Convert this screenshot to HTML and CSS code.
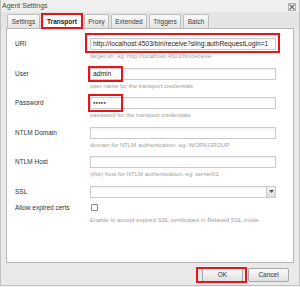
FILE: index.html
```html
<!DOCTYPE html>
<html>
<head>
<meta charset="utf-8">
<link rel="stylesheet" href="styles.css">
</head>
<body>
<div class="dialog">
  <div class="titlebar">
    <span class="title">Agent Settings</span>
    <span class="close"><svg width="6" height="6" viewBox="0 0 6 6"><path d="M0.5 0.5L5.5 5.5M5.5 0.5L0.5 5.5" stroke="#666" stroke-width="1.1"/></svg></span>
  </div>
  <div class="tabstrip">
    <div class="tab t-settings">Settings</div>
    <div class="tab t-transport active mark">Transport</div>
    <div class="tab t-proxy">Proxy</div>
    <div class="tab t-extended">Extended</div>
    <div class="tab t-triggers">Triggers</div>
    <div class="tab t-batch">Batch</div>
  </div>
  <div class="panel">
    <div class="row">
      <div class="label">URI</div>
      <div class="field">
        <div class="input mark-uri">http://localhost:4503/bin/receive?sling:authRequestLogin=1</div>
        <div class="hint">target uri. eg: http://localhost:4503/bin/receive</div>
      </div>
    </div>
    <div class="row">
      <div class="label">User</div>
      <div class="field">
        <div class="input"><span class="mark-user"></span>admin</div>
        <div class="hint">user name for the transport credentials</div>
      </div>
    </div>
    <div class="row">
      <div class="label">Password</div>
      <div class="field">
        <div class="input pw"><span class="mark-pw"></span>●●●●●</div>
        <div class="hint">password for the transport credentials</div>
      </div>
    </div>
    <div class="row">
      <div class="label">NTLM Domain</div>
      <div class="field">
        <div class="input"></div>
        <div class="hint">domain for NTLM authentication. eg: WORKGROUP</div>
      </div>
    </div>
    <div class="row">
      <div class="label">NTLM Host</div>
      <div class="field">
        <div class="input"></div>
        <div class="hint">(this) host for NTLM authentication. eg: server01</div>
      </div>
    </div>
    <div class="row row-ssl">
      <div class="label">SSL</div>
      <div class="field">
        <div class="input select"><span class="arrow"><svg width="5" height="3" viewBox="0 0 5 3"><path d="M0 0H5L2.5 3Z" fill="#555"/></svg></span></div>
      </div>
    </div>
    <div class="row">
      <div class="label">Allow expired certs</div>
      <div class="field">
        <div class="checkline"><span class="checkbox"></span></div>
        <div class="hint hint-check">Enable to accept expired SSL certificates in Relaxed SSL mode.</div>
      </div>
    </div>
  </div>
  <div class="footer">
    <button class="btn ok">OK</button>
    <button class="btn">Cancel</button>
  </div>
</div>
</body>
</html>
```
FILE: styles.css
```css
html, body {
  margin: 0;
  padding: 0;
}
body {
  width: 300px;
  height: 287px;
  background: #f2f2f2;
  font-family: "Liberation Sans", Arial, sans-serif;
  overflow: hidden;
}
.dialog {
  width: 300px;
  height: 286px;
  box-sizing: border-box;
  border: 1px solid #c2c2c2;
  border-top: none;
  background: #e9e9e9;
  display: flex;
  flex-direction: column;
}
.titlebar {
  height: 12px;
  flex: none;
  display: flex;
  align-items: center;
  justify-content: space-between;
  padding: 0 3px 0 1px;
  background: #efefef;
}
.title {
  font-size: 7px;
  color: #4a4a4a;
  line-height: 12px;
}
.close {
  width: 8px;
  height: 8px;
  box-sizing: border-box;
  border: 1px solid #b0b0b0;
  background: #f6f6f6;
  display: flex;
  align-items: center;
  justify-content: center;
  margin-top: 2px;
}
.close svg { display: block; }
.tabstrip {
  height: 16px;
  flex: none;
  display: flex;
  align-items: flex-end;
  gap: 2px;
  padding-left: 6px;
  background: #e4e4e4;
}
.tab {
  height: 14px;
  box-sizing: border-box;
  border: 1px solid #bdbdbd;
  border-bottom: none;
  border-radius: 2px 2px 0 0;
  background: linear-gradient(#fafafa, #e4e4e4);
  font-size: 6.5px;
  line-height: 13px;
  color: #3a3a3a;
  text-align: center;
  white-space: nowrap;
}
.t-settings { width: 33px; }
.t-transport { width: 40px; }
.t-proxy { width: 25px; }
.t-extended { width: 36px; }
.t-triggers { width: 32px; }
.t-batch { width: 26px; }
.tab.active {
  background: #fff;
  font-weight: bold;
  color: #222;
  height: 15px;
  margin-bottom: -1px;
  position: relative;
}
.mark::after {
  content: "";
  position: absolute;
  left: -2px;
  right: -2px;
  top: -2px;
  bottom: 0;
  border: 2px solid #e8141c;
}
.panel {
  flex: none;
  width: 288px;
  height: 235px;
  margin-left: 5px;
  box-sizing: border-box;
  border: 1px solid #b8b8b8;
  background: #fff;
  padding: 9px 0 0 8px;
}
.row {
  display: flex;
  align-items: flex-start;
  margin-bottom: 6px;
}
.row-ssl { margin-bottom: 4px; }
.label {
  width: 75px;
  flex: none;
  font-size: 6.5px;
  line-height: 12px;
  color: #333;
  white-space: nowrap;
}
.field {
  width: 186px;
  flex: none;
}
.input {
  position: relative;
  height: 12px;
  box-sizing: border-box;
  border: 1px solid #cacaca;
  background: linear-gradient(#f3f3f3, #fff 3px);
  font-size: 6.7px;
  line-height: 10px;
  padding: 0 2px;
  color: #222;
  white-space: nowrap;
}
.pw {
  font-size: 4px;
  letter-spacing: 0.2px;
}
.hint {
  font-size: 6px;
  line-height: 9.6px;
  margin-top: 2px;
  color: #a0a0a0;
  white-space: nowrap;
}
.hint-check {
  margin-top: 1px;
  line-height: 10px;
}
.mark-uri::after {
  content: "";
  position: absolute;
  left: -6px;
  right: -5px;
  top: -6px;
  bottom: -4px;
  border: 2px solid #e8141c;
  pointer-events: none;
}
.mark-user, .mark-pw {
  position: absolute;
  left: -3px;
  top: -3px;
  width: 35px;
  height: 16px;
  box-sizing: border-box;
  border: 2px solid #e8141c;
}
.mark-pw {
  top: -4px;
  height: 18px;
}
.select {
  display: flex;
  justify-content: flex-end;
  padding: 0;
}
.arrow {
  width: 9px;
  height: 10px;
  box-sizing: border-box;
  border-left: 1px solid #cacaca;
  background: linear-gradient(#f4f4f4, #dcdcdc);
  display: flex;
  align-items: center;
  justify-content: center;
}
.arrow svg { display: block; }
.checkline {
  height: 12px;
  display: flex;
  align-items: center;
}
.checkbox {
  width: 7px;
  height: 7px;
  box-sizing: border-box;
  margin-left: 1px;
  border: 1px solid #8a8a8a;
  border-radius: 1px;
  background: #fff;
}
.footer {
  flex: 1;
  display: flex;
  justify-content: flex-end;
  align-items: flex-start;
  gap: 5px;
  padding: 5px 10px 0 0;
}
.btn {
  width: 41px;
  height: 14px;
  box-sizing: border-box;
  border: 1px solid #a8a8a8;
  border-radius: 2px;
  background: linear-gradient(#fbfbfb, #e0e0e0);
  font-family: "Liberation Sans", Arial, sans-serif;
  font-size: 6.5px;
  color: #333;
  padding: 0;
  margin: 0;
  line-height: 12px;
}
.ok {
  position: relative;
}
.ok::after {
  content: "";
  position: absolute;
  left: -7px;
  right: -5px;
  top: -2px;
  bottom: -2px;
  border: 2px solid #e8141c;
}
```
